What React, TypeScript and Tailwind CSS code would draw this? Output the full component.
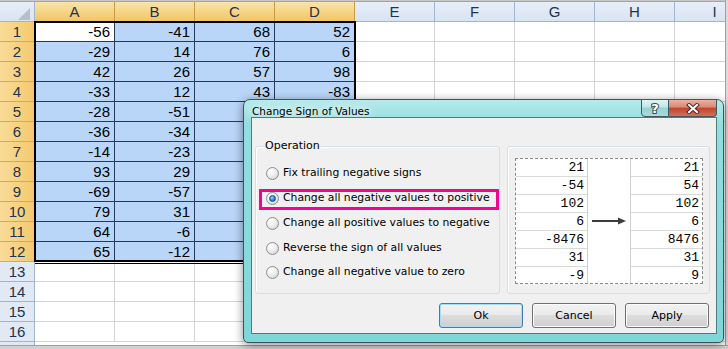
import React from "react";

const COLS = ["A", "B", "C", "D", "E", "F", "G", "H", "I"];
const DATA: (number | null)[][] = [
  [-56, -41, 68, 52],
  [-29, 14, 76, 6],
  [42, 26, 57, 98],
  [-33, 12, 43, -83],
  [-28, -51, null, null],
  [-36, -34, null, null],
  [-14, -23, null, null],
  [93, 29, null, null],
  [-69, -57, null, null],
  [79, 31, null, null],
  [64, -6, null, null],
  [65, -12, null, null],
];

const OPTIONS = [
  "Fix trailing negative signs",
  "Change all negative values to positive",
  "Change all positive values to negative",
  "Reverse the sign of all values",
  "Change all negative value to zero",
];

const LEFT = ["21", "-54", "102", "6", "-8476", "31", "-9"];
const RIGHT = ["21", "54", "102", "6", "8476", "31", "9"];

function Radio({ checked }: { checked?: boolean }) {
  return (
    <span className="flex-none w-[13px] h-[13px] rounded-full border border-[#8c8e90] bg-[radial-gradient(circle_at_35%_30%,#ffffff,#ececec_50%,#c9c9c9)] flex items-center justify-center">
      {checked && (
        <span className="w-[7px] h-[7px] rounded-full border border-[#1f4f7a] bg-[radial-gradient(circle_at_40%_35%,#a6dbff,#2a80cc_55%,#0d4a86)]" />
      )}
    </span>
  );
}

function HeaderRow() {
  return (
    <div className="flex h-[20px] flex-none">
      <div className="relative flex-none w-[35px] h-full bg-[linear-gradient(#e6eef8,#d9e4f1)] border-r border-b border-[#9eb6ce]">
        <svg className="absolute left-[17px] top-[6px]" width="14" height="13" viewBox="0 0 14 13">
          <polygon points="13,0 13,12 1,12" fill="#b6c0cc" />
        </svg>
      </div>
      {COLS.map((c, i) => (
        <div
          key={c}
          className={
            i < 4
              ? "flex-none w-[80px] h-full flex items-center justify-center border-r border-b border-[#c99a45] bg-[linear-gradient(#f9e4ab,#f2c563)] text-[15px] leading-none text-[#1f3350]"
              : "flex-none w-[80px] h-full flex items-center justify-center border-r border-b border-[#9eb6ce] bg-[linear-gradient(#e6eef8,#d9e4f1)] text-[15px] leading-none text-[#1f3350]"
          }
        >
          {c}
        </div>
      ))}
    </div>
  );
}

function SheetRow({ r }: { r: number }) {
  const sel = r <= 12;
  const vals = sel ? DATA[r - 1] : [];
  return (
    <div className="flex h-[20px] flex-none">
      <div
        className={
          sel
            ? "flex-none w-[35px] h-full flex items-center justify-center border-r border-b border-[#d9a94e] bg-[linear-gradient(90deg,#f9dc98,#f4c96e)] text-[15px] leading-none text-[#1f3350]"
            : "flex-none w-[35px] h-full flex items-center justify-center border-r border-b border-[#9eb6ce] bg-[#e1e9f5] text-[15px] leading-none text-[#1f3350]"
        }
      >
        {r}
      </div>
      {COLS.map((c, i) => {
        const inSel = sel && i < 4;
        const active = r === 1 && i === 0;
        let cls =
          "flex-none w-[80px] h-full flex items-center justify-end pr-[4px] border-r border-b border-[#d4d4d4] bg-white text-[15px] leading-none text-black";
        if (inSel && active)
          cls =
            "flex-none w-[80px] h-full flex items-center justify-end pr-[4px] border-r border-b border-[#243a5a] bg-white text-[15px] leading-none text-black";
        else if (inSel)
          cls =
            "flex-none w-[80px] h-full flex items-center justify-end pr-[4px] border-r border-b border-[#243a5a] bg-[#b9d5f7] text-[15px] leading-none text-black";
        const v = inSel ? vals[i] : null;
        return (
          <div key={c} className={cls}>
            {v === null || v === undefined ? "" : v}
          </div>
        );
      })}
    </div>
  );
}

function Dialog() {
  return (
    <div className="absolute left-[243px] top-[99px] w-[481px] h-[244px] rounded-t-[7px] rounded-b-[5px] border border-[#3b5459] bg-[linear-gradient(180deg,#b6eaeb,#94dedf_10%,#7fd6d8)] shadow-[0_2px_10px_rgba(0,0,0,0.45)] flex flex-col pl-[7px] pr-[6px] pb-[8px] font-['DejaVu_Sans',sans-serif]">
      <div className="h-[17px] flex-none flex items-start justify-between">
        <span className="mt-[6px] ml-[1px] text-[10.5px] leading-none text-black [text-shadow:0_0_6px_#fff,0_0_10px_#fff,0_0_14px_#fff]">
          Change Sign of Values
        </span>
        <div className="flex -mt-[1px] h-[18px]">
          <div className="w-[28px] h-full border border-[#41595e] rounded-bl-[4px] bg-[linear-gradient(#def4f4,#bfe6e7_45%,#96d2d3_50%,#a9dcdc)] flex items-center justify-center">
            <svg width="10" height="14" viewBox="0 0 10 14">
              <text x="5" y="12" textAnchor="middle" fontFamily="DejaVu Sans" fontWeight="bold" fontSize="13" fill="#ffffff" stroke="#3b4a4f" strokeWidth="2" paintOrder="stroke">
                ?
              </text>
            </svg>
          </div>
          <div className="w-[48px] h-full border border-l-0 border-[#41595e] rounded-br-[4px] bg-[linear-gradient(#eab1a2,#d98a75_45%,#c3432b_50%,#d0705a)] flex items-center justify-center">
            <svg width="14" height="11" viewBox="0 0 14 11">
              <path d="M3 2 L11 9 M11 2 L3 9" stroke="#4a2b25" strokeWidth="4" strokeLinecap="square" />
              <path d="M3 2 L11 9 M11 2 L3 9" stroke="#ffffff" strokeWidth="2" strokeLinecap="square" />
            </svg>
          </div>
        </div>
      </div>
      <div className="flex-1 border border-[#4e7b81] bg-[#f0f0f0] flex flex-col">
        <div className="flex mt-[28px] ml-[3px] gap-[7px] h-[148px] flex-none">
          <div className="relative w-[245px] h-full border border-[#d5dfe5] rounded-[3px] shadow-[inset_1px_1px_0_#ffffff]">
            <span className="absolute left-[8px] -top-[7px] px-[1px] bg-[#f0f0f0] text-[11px] leading-none text-black">
              Operation
            </span>
            <div className="flex flex-col pt-[14.5px] pl-[10px]">
              {OPTIONS.map((o, i) => (
                <div key={o} className="h-[24.75px] flex items-center gap-[4px] text-[10.8px] leading-none text-black whitespace-nowrap">
                  <Radio checked={i === 1} />
                  <span>{o}</span>
                </div>
              ))}
            </div>
            <div className="absolute left-[3px] top-[42px] w-[240px] h-[21px] border-[3px] border-[#f0068c]" />
          </div>
          <div className="w-[203px] h-full border border-[#d5dfe5] rounded-[3px] shadow-[inset_1px_1px_0_#ffffff] pt-[11px] pl-[7px]">
            <div className="w-[188px] h-[126px] border border-dashed border-[#8a8a8a] bg-white flex font-['Liberation_Mono',monospace] text-[13px] text-black">
              <div className="w-[72px] border-r border-[#d0d0d0] flex flex-col">
                {LEFT.map((v, i) => (
                  <div
                    key={i}
                    className={
                      i < 6
                        ? "h-[18px] flex-none border-b border-[#dadada] flex items-center justify-end pr-[3px] leading-none"
                        : "h-[16px] flex-none flex items-center justify-end pr-[3px] leading-none"
                    }
                  >
                    {v}
                  </div>
                ))}
              </div>
              <div className="w-[42px] flex items-center justify-center">
                <svg width="34" height="8" viewBox="0 0 34 8">
                  <line x1="0" y1="4" x2="28" y2="4" stroke="#3c3c3c" strokeWidth="2" />
                  <polygon points="26,0.5 34,4 26,7.5" fill="#3c3c3c" />
                </svg>
              </div>
              <div className="w-[72px] border-l border-[#d0d0d0] flex flex-col">
                {RIGHT.map((v, i) => (
                  <div
                    key={i}
                    className={
                      i < 6
                        ? "h-[18px] flex-none border-b border-[#dadada] flex items-center justify-end pr-[3px] leading-none"
                        : "h-[16px] flex-none flex items-center justify-end pr-[3px] leading-none"
                    }
                  >
                    {v}
                  </div>
                ))}
              </div>
            </div>
          </div>
        </div>
        <div className="flex justify-end gap-[9px] mt-[9px] mr-[7px] flex-none">
          <div className="w-[84px] h-[25px] rounded-[3px] border border-[#3c7fb1] bg-[linear-gradient(#f2f2f2,#ebebeb_45%,#dddddd_50%,#cfcfcf)] shadow-[inset_0_0_0_1px_#a8dcf8] flex items-center justify-center text-[11px] leading-none text-black">
            Ok
          </div>
          <div className="w-[84px] h-[25px] rounded-[3px] border border-[#707070] bg-[linear-gradient(#f2f2f2,#ebebeb_45%,#dddddd_50%,#cfcfcf)] shadow-[inset_0_0_0_1px_#fcfcfc] flex items-center justify-center text-[11px] leading-none text-black">
            Cancel
          </div>
          <div className="w-[84px] h-[25px] rounded-[3px] border border-[#707070] bg-[linear-gradient(#f2f2f2,#ebebeb_45%,#dddddd_50%,#cfcfcf)] shadow-[inset_0_0_0_1px_#fcfcfc] flex items-center justify-center text-[11px] leading-none text-black">
            Apply
          </div>
        </div>
      </div>
    </div>
  );
}

export default function App() {
  const rows = Array.from({ length: 16 }, (_, i) => i + 1);
  return (
    <div className="relative w-[728px] h-[349px] overflow-hidden bg-white flex flex-col font-['Liberation_Sans',Arial,sans-serif]">
      <div className="flex h-[345px] flex-none">
        <div className="w-[725px] h-full overflow-hidden flex flex-col flex-none">
          <div className="h-[1px] flex-none bg-[#c8c8c8]" />
          <div className="h-[1px] flex-none bg-[#a4a4a4]" />
          <HeaderRow />
          {rows.map((r) => (
            <SheetRow key={r} r={r} />
          ))}
          <div className="flex h-[3px] flex-none">
            <div className="flex-none w-[35px] h-full border-r border-[#9eb6ce] bg-[#e1e9f5]" />
          </div>
        </div>
        <div className="flex-1 h-full border-l border-[#a0a0a0] bg-[#dcdcdc]" />
      </div>
      <div className="h-[1px] flex-none bg-[#a0a0a0]" />
      <div className="h-[3px] flex-none bg-[#d0d0d0]" />

      <div className="absolute left-[34px] top-[21px] w-[322px] h-[241px] border-2 border-black pointer-events-none" />
      <div className="absolute left-[35px] top-[263px] w-[320px] h-[1px] bg-black pointer-events-none" />

      <Dialog />
    </div>
  );
}
